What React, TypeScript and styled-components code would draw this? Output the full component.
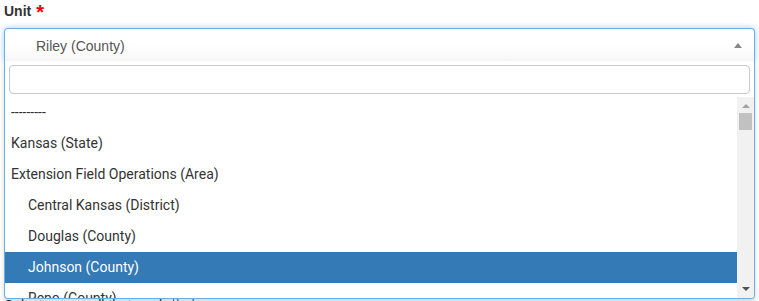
import React from "react";
import styled, { createGlobalStyle } from "styled-components";

const GlobalStyle = createGlobalStyle`
  html, body {
    margin: 0;
    padding: 0;
    background: #fff;
    overflow: hidden;
  }
  body {
    font-family: "Liberation Sans", Arial, sans-serif;
    color: #333;
  }
`;

const Page = styled.div`
  padding: 0 4px 0 4px;
  width: 751px;
`;

const Label = styled.label`
  display: block;
  font-size: 14px;
  font-weight: bold;
  line-height: 20px;
  margin: 1px 0 6px 0;
  color: #333;
`;

const Star = styled.span`
  color: #e00;
  font-size: 20px;
  margin-left: 5px;
  vertical-align: -3px;
`;

const Field = styled.div`
  position: relative;
  width: 751px;
`;

const Selection = styled.div`
  box-sizing: border-box;
  height: 34px;
  display: flex;
  align-items: center;
  justify-content: space-between;
  padding: 0 12px 0 31px;
  border: 1px solid #66afe9;
  border-bottom: none;
  border-radius: 4px 4px 0 0;
  background: linear-gradient(to bottom, #fff 0%, #fff 50%, #f6f6f6 100%);
  box-shadow: 0 0 6px rgba(102, 175, 233, 0.6);
  font-size: 14px;
  color: #555;
`;

const Caret = styled.span`
  width: 0;
  height: 0;
  border-left: 4px solid transparent;
  border-right: 4px solid transparent;
  border-bottom: 5px solid #888;
`;

const Dropdown = styled.div`
  position: absolute;
  left: 0;
  top: 33px;
  width: 751px;
  box-sizing: border-box;
  border: 1px solid #66afe9;
  border-top: none;
  border-radius: 0 0 4px 4px;
  background: #fff;
  box-shadow: 0 4px 5px rgba(0, 0, 0, 0.15);
  z-index: 2;
`;

const SearchWrap = styled.div`
  padding: 4px 4px 3px 4px;
`;

const SearchInput = styled.input`
  box-sizing: border-box;
  display: block;
  width: 100%;
  height: 29px;
  border: 1px solid #c8c8c8;
  border-radius: 4px;
  outline: none;
  font-size: 14px;
  padding: 0 6px;
`;

const Results = styled.div`
  display: flex;
  height: 201px;
`;

const Options = styled.ul`
  flex: 1;
  list-style: none;
  margin: 0;
  padding: 0;
  overflow: hidden;
  font-family: Roboto, "Liberation Sans", sans-serif;
  font-size: 14px;
`;

const Option = styled.li<{ $indent?: boolean; $active?: boolean }>`
  height: 31px;
  line-height: 31px;
  padding-left: ${(p) => (p.$indent ? "23px" : "6px")};
  background: ${(p) => (p.$active ? "#337ab7" : "transparent")};
  color: ${(p) => (p.$active ? "#fff" : "#333")};
  white-space: nowrap;
`;

const Scrollbar = styled.div`
  width: 17px;
  background: #f1f1f1;
  display: flex;
  flex-direction: column;
  align-items: center;
  border-bottom-right-radius: 3px;
`;

const ArrowUp = styled.span`
  margin-top: 7px;
  width: 0;
  height: 0;
  border-left: 4px solid transparent;
  border-right: 4px solid transparent;
  border-bottom: 4px solid #a3a3a3;
`;

const Thumb = styled.div`
  margin-top: 5px;
  width: 13px;
  height: 17px;
  background: #c1c1c1;
`;

const Spacer = styled.div`
  flex: 1;
`;

const ArrowDown = styled.span`
  margin-bottom: 7px;
  width: 0;
  height: 0;
  border-left: 4px solid transparent;
  border-right: 4px solid transparent;
  border-top: 4px solid #505050;
`;

const Help = styled.p`
  margin: 235px 0 0 0;
  font-size: 14px;
  color: #333;
`;

const HelpLink = styled.a`
  color: #337ab7;
  border-left: 1px solid #337ab7;
  padding-left: 2px;
`;

const options = [
  { label: "---------" },
  { label: "Kansas (State)" },
  { label: "Extension Field Operations (Area)" },
  { label: "Central Kansas (District)", indent: true },
  { label: "Douglas (County)", indent: true },
  { label: "Johnson (County)", indent: true, active: true },
  { label: "Reno (County)", indent: true },
];

const App: React.FC = () => {
  return (
    <>
      <GlobalStyle />
      <Page>
        <Label>
          Unit<Star>*</Star>
        </Label>
        <Field>
          <Selection>
            <span>Riley (County)</span>
            <Caret />
          </Selection>
          <Dropdown>
            <SearchWrap>
              <SearchInput type="text" />
            </SearchWrap>
            <Results>
              <Options>
                {options.map((o) => (
                  <Option key={o.label} $indent={o.indent} $active={o.active}>
                    {o.label}
                  </Option>
                ))}
              </Options>
              <Scrollbar>
                <ArrowUp />
                <Thumb />
                <Spacer />
                <ArrowDown />
              </Scrollbar>
            </Results>
          </Dropdown>
          <Help>
            Select one or all that apply <HelpLink href="#">help</HelpLink>
          </Help>
        </Field>
      </Page>
    </>
  );
};

export default App;
